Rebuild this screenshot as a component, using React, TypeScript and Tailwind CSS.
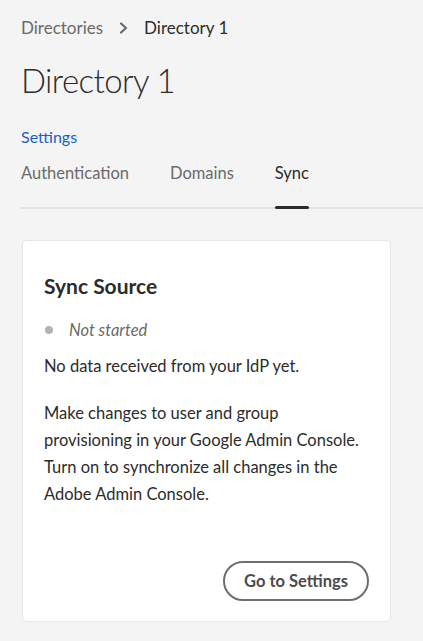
import React from 'react';

const tabs = ['Authentication', 'Domains', 'Sync'];

const App = () => {
  return (
    <div
      className="min-h-[641px] w-[423px] bg-[#f4f4f4] text-[#2c2c2c]"
      style={{ fontFamily: 'Lato, "Open Sans", sans-serif' }}
    >
      <div className="pl-[21px] pt-[16px]">
        <div className="flex items-center h-[24px] text-[17px]">
          <span className="text-[#6a6a6a]">Directories</span>
          <svg className="mx-[16px]" width="9" height="12" viewBox="0 0 9 12">
            <path d="M2 1.5 L7 6 L2 10.5" fill="none" stroke="#6a6a6a" strokeWidth="2.2" strokeLinecap="round" strokeLinejoin="round" />
          </svg>
          <span className="text-[#2c2c2c]">Directory 1</span>
        </div>
        <h1 className="mt-[18px] text-[33px] leading-[44px] font-light tracking-[-0.6px] text-[#2c2c2c]">Directory 1</h1>
        <div className="mt-[24px] text-[16px] leading-[22px] text-[#1d5fbf]">Settings</div>
      </div>
      <div className="ml-[21px] mt-[10px] flex border-b-2 border-[#e1e1e1]">
        {tabs.map((tab) => (
          <div
            key={tab}
            className={`relative mr-[41px] pb-[22px] pt-[3px] text-[16.5px] leading-[24px] ${tab === 'Sync' ? 'text-[#2c2c2c]' : 'text-[#6a6a6a]'}`}
          >
            {tab}
            {tab === 'Sync' && (
              <span className="absolute left-0 right-0 -bottom-[2px] h-[3px] rounded-full bg-[#2c2c2c]"></span>
            )}
          </div>
        ))}
      </div>
      <div className="ml-[22px] mt-[31px] mr-[32px] rounded-[5px] border border-[#e6e6e6] bg-white px-[21px] pt-[31px] pb-[20px]">
        <h2 className="text-[21px] leading-[28px] font-bold text-[#2c2c2c]">Sync Source</h2>
        <div className="mt-[19px] flex items-center text-[16.5px] leading-[22px]">
          <span className="ml-[1px] h-[8px] w-[8px] rounded-full bg-[#b3b3b3]"></span>
          <span className="ml-[16px] italic text-[#6a6a6a]">Not started</span>
        </div>
        <p className="mt-[12px] text-[16.5px] leading-[26px]">No data received from your IdP yet.</p>
        <p className="mt-[21px] max-w-[322px] text-[16.5px] leading-[27px]">
          Make changes to user and group provisioning in your Google Admin Console. Turn on to synchronize all changes in the Adobe Admin Console.
        </p>
        <div className="mt-[53px] flex justify-end">
          <button className="h-[40px] rounded-full border-2 border-[#6e6e6e] px-[19px] text-[16.5px] font-bold text-[#4b4b4b]">
            Go to Settings
          </button>
        </div>
      </div>
    </div>
  );
};

export default App;
